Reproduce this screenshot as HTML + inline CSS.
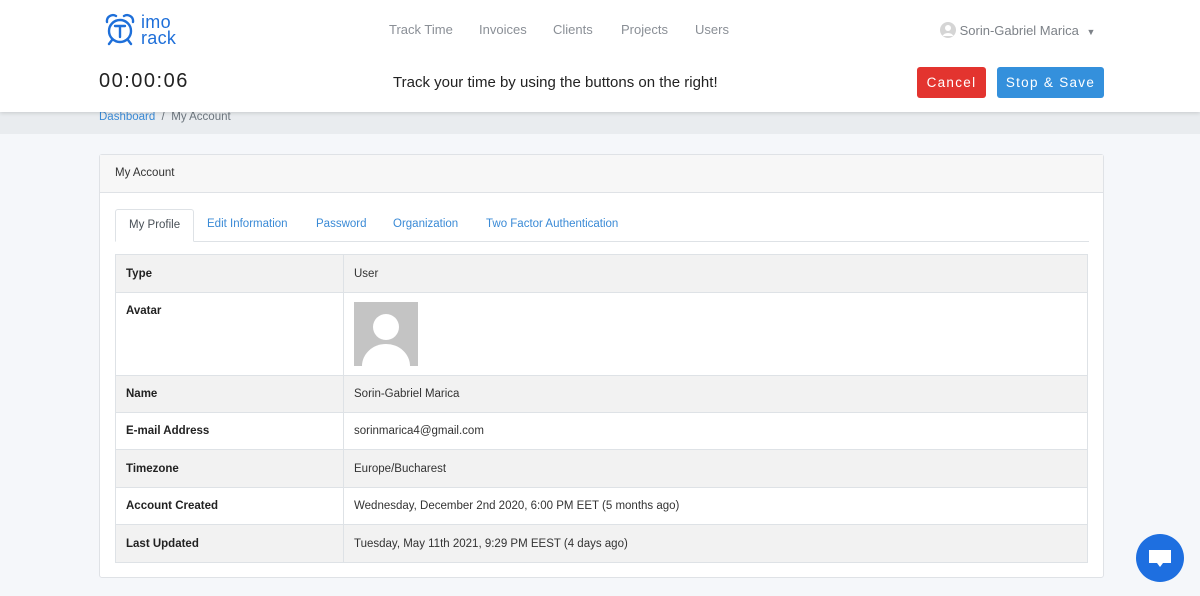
<!DOCTYPE html>
<html><head><meta charset="utf-8"><style>
*{box-sizing:border-box;margin:0;padding:0}
body{width:1200px;height:596px;overflow:hidden;background:#f5f7fa;font-family:"Liberation Sans",sans-serif;color:#212529;position:relative}
.hdr{position:absolute;left:0;top:0;width:1200px;height:112px;background:#fff;box-shadow:0 1px 4px rgba(0,0,0,.15);z-index:2}
.logo{position:absolute;left:105px;top:13px}
.logo .t{position:absolute;left:36px;top:1px;color:#1e6fd9;font-size:18px;line-height:16px;letter-spacing:.3px}
.nav{position:absolute;top:22px;font-size:13px;color:#8a8f96}
.user{position:absolute;left:940px;top:22px;font-size:13px;color:#7d8288}
.timer{position:absolute;left:99px;top:70px;font-size:20px;letter-spacing:1.5px;color:#222}
.msg{position:absolute;left:393px;top:74px;font-size:15px;color:#222}
.btn{position:absolute;top:67px;height:31px;color:#fff;font-size:13.5px;letter-spacing:1.3px;border-radius:3px;text-align:center;line-height:31px}
.bc{position:absolute;left:0;top:112px;width:1200px;height:22px;background:#e9ecef;font-size:11.5px;color:#6c757d;padding-left:99px;line-height:11px;padding-top:0}
.bc a{color:#3a8ad6;text-decoration:none}
.card{position:absolute;left:99px;top:154px;width:1005px;height:424px;background:#fff;border:1px solid #dfe2e6;border-radius:3px}
.ch{height:38px;background:#f7f7f7;border-bottom:1px solid #dfe2e6;font-size:11.5px;padding:12px 15px;color:#333}
.tabs{position:absolute;left:15px;top:54px;width:974px;height:33px;border-bottom:1px solid #dee2e6}
.tab{position:absolute;top:0;height:33px;font-size:11.5px;color:#3a8ad6;line-height:31px}
.tab.a{border:1px solid #dee2e6;border-bottom-color:#fff;border-radius:3px 3px 0 0;color:#495057;background:#fff;padding:0 13px;height:33px}
table{position:absolute;left:15px;top:99px;width:973px;border-collapse:collapse;font-size:11.5px}
td{border:1px solid #dee2e6;padding:0 10px;height:37px;vertical-align:middle}
tr.h td{height:38px}
td:first-child{width:228px;font-weight:600;color:#222}
td:last-child{color:#333}
tr.s td{background:#f2f2f2}
.chat{position:absolute;left:1136px;top:534px;width:48px;height:48px;border-radius:50%;background:#1e6fe0}
</style></head><body>
<div class="hdr">
 <div class="logo">
  <svg width="34" height="34" viewBox="0 0 34 34"><g fill="none" stroke="#1e6fd9" stroke-width="2.4" stroke-linecap="round"><circle cx="15" cy="18" r="11"/><path d="M2 9 a6 6 0 0 1 9-6"/><path d="M28 9 a6 6 0 0 0 -9-6"/><path d="M10 13h10M15 13v11"/><path d="M7 27l-3 4M23 27l3 4"/></g></svg>
  <div class="t">imo<br>rack</div>
 </div>
 <div class="nav" style="left:389px">Track Time</div>
 <div class="nav" style="left:479px">Invoices</div>
 <div class="nav" style="left:553px">Clients</div>
 <div class="nav" style="left:621px">Projects</div>
 <div class="nav" style="left:695px">Users</div>
 <div class="user"><svg width="16" height="16" viewBox="0 0 16 16" style="vertical-align:-3px"><circle cx="8" cy="8" r="8" fill="#d5d5d5"/><circle cx="8" cy="6" r="3" fill="#fff"/><path d="M2.5 14a6 5 0 0 1 11 0z" fill="#fff"/></svg> Sorin-Gabriel Marica <span style="font-size:9px;margin-left:4px">&#9660;</span></div>
 <div class="timer">00:00:06</div>
 <div class="msg">Track your time by using the buttons on the right!</div>
 <div class="btn" style="left:917px;width:69px;background:#e3342f">Cancel</div>
 <div class="btn" style="left:997px;width:107px;background:#3490dc">Stop &amp; Save</div>
</div>
<div class="bc"><a>Dashboard</a> &nbsp;/&nbsp; My Account</div>
<div class="card">
 <div class="ch">My Account</div>
 <div class="tabs">
  <div class="tab a" style="left:0">My Profile</div>
  <div class="tab" style="left:92px">Edit Information</div>
  <div class="tab" style="left:201px">Password</div>
  <div class="tab" style="left:278px">Organization</div>
  <div class="tab" style="left:371px">Two Factor Authentication</div>
 </div>
 <table>
  <tr class="s h"><td>Type</td><td>User</td></tr>
  <tr><td style="height:83px;vertical-align:top;padding-top:12px">Avatar</td><td style="vertical-align:top;padding-top:9px"><svg width="64" height="64" viewBox="0 0 64 64"><rect width="64" height="64" fill="#c4c4c4"/><circle cx="32" cy="25" r="13" fill="#fff"/><path d="M8 64a24 22 0 0 1 48 0z" fill="#fff"/></svg></td></tr>
  <tr class="s"><td>Name</td><td>Sorin-Gabriel Marica</td></tr>
  <tr><td>E-mail Address</td><td>sorinmarica4@gmail.com</td></tr>
  <tr class="s h"><td>Timezone</td><td>Europe/Bucharest</td></tr>
  <tr><td>Account Created</td><td>Wednesday, December 2nd 2020, 6:00 PM EET (5 months ago)</td></tr>
  <tr class="s h"><td>Last Updated</td><td>Tuesday, May 11th 2021, 9:29 PM EEST (4 days ago)</td></tr>
 </table>
</div>
<div class="chat"><svg width="48" height="48" viewBox="0 0 48 48"><path d="M13 16h22v13H27l-3 4-3-4h-8z" fill="#fff"/></svg></div>
</body></html>
